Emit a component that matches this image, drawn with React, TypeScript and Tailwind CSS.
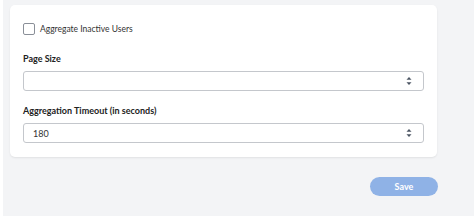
import { useState } from 'react';

function Spinner() {
  return (
    <svg width="6" height="9" viewBox="0 0 6 9" className="absolute right-[12px] top-1/2 -translate-y-1/2">
      <path d="M3 0.5 L5.5 3.3 H0.5 Z" fill="#4b5563" />
      <path d="M3 8.5 L5.5 5.7 H0.5 Z" fill="#4b5563" />
    </svg>
  );
}

function NumberField({ label, value }: { label: string; value: string }) {
  return (
    <div className="flex flex-col">
      <label className="block text-[9px] font-bold text-[#222] leading-[12px] mb-[6px]">{label}</label>
      <div className="relative h-[20px]">
        <input
          type="text"
          defaultValue={value}
          className="block w-full h-[20px] border border-[#c4c7cc] rounded-[3px] bg-white pl-[9px] text-[9px] text-[#333] outline-none"
          style={{ fontFamily: 'inherit' }}
        />
        <Spinner />
      </div>
    </div>
  );
}

export default function App() {
  const [aggregate, setAggregate] = useState(false);

  return (
    <div className="w-[474px] h-[219px] bg-white overflow-hidden" style={{ fontFamily: 'Lato, "Open Sans", sans-serif' }}>
      <div className="ml-[3px] h-[216px] bg-[#f3f4f6] pt-[5px] pl-[7px] pr-[37px]">
        {/* Settings card */}
        <div className="bg-white rounded-[5px] shadow-[0_1px_2px_rgba(0,0,0,0.08)] px-[13px] pt-[18px] pb-[14px]">
          <label className="flex items-center gap-[5px] h-[12px] cursor-pointer">
            <input
              type="checkbox"
              checked={aggregate}
              onChange={() => setAggregate(!aggregate)}
              className="appearance-none w-[12px] h-[12px] border border-[#8a8f98] rounded-[2px] bg-white"
            />
            <span className="text-[8.5px] text-[#333] leading-[12px]">Aggregate Inactive Users</span>
          </label>

          <div className="mt-[18px]">
            <NumberField label="Page Size" value="" />
          </div>
          <div className="mt-[14px]">
            <NumberField label="Aggregation Timeout (in seconds)" value="180" />
          </div>
        </div>

        {/* Footer */}
        <div className="flex justify-end mt-[20px] -mr-[1px]">
          <button className="w-[68px] h-[19px] rounded-full bg-[#8fb2e6] text-white text-[9px] font-bold leading-none">
            Save
          </button>
        </div>
      </div>
    </div>
  );
}
